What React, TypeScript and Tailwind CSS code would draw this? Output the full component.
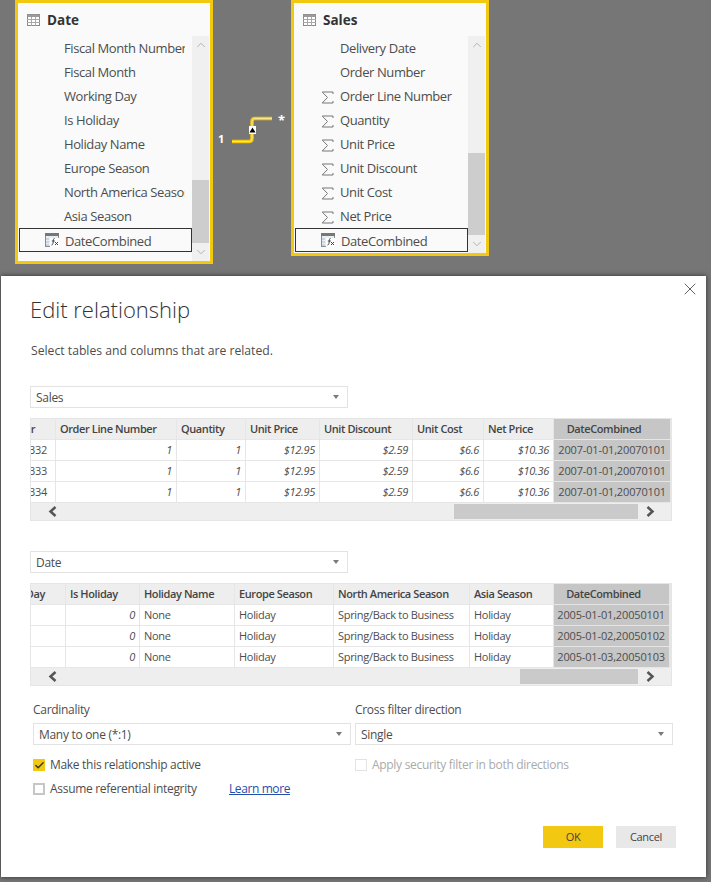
import { Check, ChevronDown, ChevronUp, X } from "lucide-react";

const font = { fontFamily: '"Open Sans", "Noto Sans", sans-serif' };

function TableIcon() {
  return (
    <svg width="13" height="12" viewBox="0 0 13 12" className="shrink-0">
      <rect x="0.5" y="0.5" width="12" height="11" fill="#fff" stroke="#8a8a8a" />
      <rect x="0.5" y="0.5" width="12" height="2.5" fill="#9a9a9a" />
      <path d="M0 5.500h13M0 8.500h13M4.500 3v9M8.500 3v9" stroke="#a8a8a8" fill="none" />
    </svg>
  );
}

function SigmaIcon() {
  return (
    <svg width="13" height="13" viewBox="0 0 13 13" className="shrink-0">
      <path d="M12 3V1H1.200L6.500 6.500 1.200 12H12v-2" fill="none" stroke="#777" strokeWidth="1" />
    </svg>
  );
}

function CalcIcon() {
  return (
    <svg width="14" height="14" viewBox="0 0 14 14" className="shrink-0">
      <rect x="0.5" y="0.5" width="13" height="13" fill="#e8eef4" stroke="#8b8b8b" />
      <rect x="0" y="0" width="14" height="3" fill="#777" />
      <rect x="5" y="5" width="9" height="9" fill="#fff" />
      <path d="M1 6h3M1 9h3M1 12h3" stroke="#a8bdd0" />
      <path d="M9.500 5.500c-1.400 0-1 1.300-1.300 3.500-.2 1.800-.6 3-1.700 3M6.800 8h3M10 9l3 3M13 9l-3 3" fill="none" stroke="#333" strokeWidth="0.9" />
    </svg>
  );
}

function ScrollBar({ before, thumb, after }: { before: string; thumb: string; after: string }) {
  return (
    <div className="flex flex-col w-[17px] h-full bg-[#f0f0f0] shrink-0">
      <div className={`${before} flex justify-center pt-[2px]`}>
        <ChevronUp size={14} strokeWidth={1.4} className="text-[#a6a6a6]" />
      </div>
      <div className={`${thumb} bg-[#cdcdcd]`} />
      <div className={`${after} flex justify-center items-end pb-[2px]`}>
        <ChevronDown size={14} strokeWidth={1.4} className="text-[#a6a6a6]" />
      </div>
    </div>
  );
}

function FieldRow({ name, sigma }: { name: string; sigma?: boolean }) {
  return (
    <div className="flex items-center h-6 w-[166px] overflow-hidden pl-[26px] pt-[2px] text-[13px] tracking-[-0.4px] text-[#4d4d4d] whitespace-nowrap">
      <div className="w-[13px] shrink-0">{sigma && <SigmaIcon />}</div>
      <span className="ml-[6px]">{name}</span>
    </div>
  );
}

function SelectedRow() {
  return (
    <div className="flex items-center h-6 w-[173px] border border-[#333] pl-[25px] text-[13px] tracking-[-0.4px] text-[#4d4d4d] whitespace-nowrap">
      <CalcIcon />
      <span className="ml-[6px] mt-[4px]">DateCombined</span>
    </div>
  );
}

function ModelCard({
  title,
  height,
  fields,
  scroll,
}: {
  title: string;
  height: string;
  fields: { name: string; sigma?: boolean }[];
  scroll: { before: string; thumb: string; after: string };
}) {
  return (
    <div className={`${height} w-[198px] shrink-0 border-[3px] border-[#f2c811] bg-[#fafafa] flex flex-col`}>
      <div className="h-[33px] shrink-0 flex items-center pl-[9px] pt-[1px] gap-[7px]">
        <TableIcon />
        <span className="text-[13.5px] font-bold text-[#333]">{title}</span>
      </div>
      <div className="flex flex-1 min-h-0 pl-px pr-px">
        <div className="w-[173px] shrink-0">
          {fields.map((f) => (
            <FieldRow key={f.name} name={f.name} sigma={f.sigma} />
          ))}
          <SelectedRow />
        </div>
        <ScrollBar {...scroll} />
      </div>
    </div>
  );
}

function Connector() {
  return (
    <svg width="78" height="160" viewBox="0 0 78 160" className="shrink-0">
      <path d="M19 141.500H36q3 0 3-3V121.500q0-3 3-3H59" fill="none" stroke="#f2c811" strokeWidth="3.500" />
      <path d="M19 141.500H36q3 0 3-3V121.500q0-3 3-3H59" fill="none" stroke="#fbe68c" strokeWidth="1" />
      <rect x="36" y="126" width="7" height="8" fill="#fff" />
      <path d="M39.500 127.500l3 5h-6z" fill="#000" />
      <text x="5" y="143" fill="#fff" fontSize="11" fontWeight="700">1</text>
      <text x="65" y="125" fill="#fff" fontSize="13" fontWeight="700">*</text>
    </svg>
  );
}

function Caret() {
  return <span className="w-0 h-0 border-x-[3.5px] border-x-transparent border-t-[4px] border-t-[#7a7a7a]" />;
}

function Select({ value, width }: { value: string; width: string }) {
  return (
    <div className={`${width} h-[22px] flex items-center justify-between border border-[#e3e3e3] pl-[5px] pr-[8px] text-[12px] tracking-[-0.3px] text-[#4d4d4d] bg-white`}>
      <span className="mt-px">{value}</span>
      <Caret />
    </div>
  );
}

type Cell = { text: string; align?: "r" | "l" | "clip" };

function DataTable({
  columns,
  headers,
  rows,
  thumb,
  spacer,
}: {
  columns: string;
  headers: { text: string; clip?: boolean }[];
  rows: Cell[][];
  thumb: string;
  spacer: string;
}) {
  const last = headers.length - 1;
  return (
    <div className="ml-[29px] w-[642px] border border-[#e6e6e6] bg-[#e6e6e6] text-[11px] tracking-[-0.3px] whitespace-nowrap">
      <div className={`grid ${columns} gap-x-px gap-y-px bg-[#e6e6e6] pb-px`}>
        {headers.map((h, i) => (
          <div
            key={h.text}
            className={`h-5 flex items-center overflow-hidden font-semibold tracking-[-0.4px] text-[#444] ${
              i === last ? "bg-[#c6c6c6] justify-center pr-[16px]" : "bg-[#eeeeee] pl-[4px]"
            } ${h.clip ? "justify-end pr-[20px] pl-0" : ""}`}
          >
            <span className="shrink-0">{h.text}</span>
          </div>
        ))}
        {rows.flat().map((c, i) => {
          const isLast = i % headers.length === last;
          return (
            <div
              key={i}
              className={`h-5 flex items-center overflow-hidden text-[#4d4d4d] ${
                isLast ? "bg-[#c6c6c6] justify-end pr-[4px] tracking-[-0.15px]" : "bg-white"
              } ${c.align === "r" && !isLast ? "justify-end pr-[4px] italic" : ""} ${
                c.align === "l" && !isLast ? "pl-[4px]" : ""
              } ${c.align === "clip" ? "justify-end pr-[8px]" : ""}`}
            >
              <span className="shrink-0">{c.text}</span>
            </div>
          );
        })}
      </div>
      <div className="h-[17px] bg-[#eeeeee] flex items-center">
        <svg width="10" height="11" viewBox="0 0 10 11" className="ml-[17px] shrink-0">
          <path d="M7.500 1L2.500 5.500L7.500 10" fill="none" stroke="#555" strokeWidth="2.500" />
        </svg>
        <div className={spacer} />
        <div className={`${thumb} h-[15px] bg-[#cacaca]`} />
        <svg width="10" height="11" viewBox="0 0 10 11" className="ml-[7px] shrink-0">
          <path d="M2.500 1L7.500 5.500L2.500 10" fill="none" stroke="#555" strokeWidth="2.500" />
        </svg>
      </div>
    </div>
  );
}

const salesRows: Cell[][] = ["332", "333", "334"].map((n) => [
  { text: "20071" + n, align: "clip" },
  { text: "1", align: "r" },
  { text: "1", align: "r" },
  { text: "$12.95", align: "r" },
  { text: "$2.59", align: "r" },
  { text: "$6.6", align: "r" },
  { text: "$10.36", align: "r" },
  { text: "2007-01-01,20070101", align: "r" },
]);

const dateRows: Cell[][] = ["2005-01-01,20050101", "2005-01-02,20050102", "2005-01-03,20050103"].map((d) => [
  { text: "", align: "r" },
  { text: "0", align: "r" },
  { text: "None", align: "l" },
  { text: "Holiday", align: "l" },
  { text: "Spring/Back to Business", align: "l" },
  { text: "Holiday", align: "l" },
  { text: d, align: "r" },
]);

export default function App() {
  return (
    <div style={font} className="w-[711px] h-[882px] bg-[#767676] overflow-hidden">
      <div className="h-[276px] flex items-start pl-[15px]">
        <ModelCard
          title="Date"
          height="h-[264px]"
          scroll={{ before: "h-[144px]", thumb: "h-[63px]", after: "h-[18px]" }}
          fields={[
            { name: "Fiscal Month Number" },
            { name: "Fiscal Month" },
            { name: "Working Day" },
            { name: "Is Holiday" },
            { name: "Holiday Name" },
            { name: "Europe Season" },
            { name: "North America Season" },
            { name: "Asia Season" },
          ]}
        />
        <Connector />
        <ModelCard
          title="Sales"
          height="h-[256px]"
          scroll={{ before: "h-[117px]", thumb: "h-[82px]", after: "h-[18px]" }}
          fields={[
            { name: "Delivery Date" },
            { name: "Order Number" },
            { name: "Order Line Number", sigma: true },
            { name: "Quantity", sigma: true },
            { name: "Unit Price", sigma: true },
            { name: "Unit Discount", sigma: true },
            { name: "Unit Cost", sigma: true },
            { name: "Net Price", sigma: true },
          ]}
        />
      </div>

      <div className="relative ml-px w-[705px] h-[601px] bg-white shadow-[0_0_5px_rgba(0,0,0,0.6)]">
        <button className="absolute top-[3px] right-[6px] text-[#555]">
          <X size={20} strokeWidth={1.1} />
        </button>
        <div className="pt-[14px] pl-[29px] text-[22px] font-light leading-[38px] text-[#333]">Edit relationship</div>
        <div className="mt-[14px] pl-[30px] text-[12.2px] leading-[18px] text-[#4d4d4d]">
          Select tables and columns that are related.
        </div>

        <div className="mt-[26px] ml-[29px]">
          <Select value="Sales" width="w-[318px]" />
        </div>
        <div className="mt-[10px]">
          <DataTable
            columns="grid-cols-[24px_120px_68px_73px_92px_70px_69px_116px]"
            headers={[
              { text: "Order Number", clip: true },
              { text: "Order Line Number" },
              { text: "Quantity" },
              { text: "Unit Price" },
              { text: "Unit Discount" },
              { text: "Unit Cost" },
              { text: "Net Price" },
              { text: "DateCombined" },
            ]}
            rows={salesRows}
            spacer="w-[396px] shrink-0"
            thumb="w-[184px] shrink-0"
          />
        </div>

        <div className="mt-[30px] ml-[29px]">
          <Select value="Date" width="w-[318px]" />
        </div>
        <div className="mt-[10px]">
          <DataTable
            columns="grid-cols-[34px_73px_94px_98px_135px_83px_115px]"
            headers={[
              { text: "Working Day", clip: true },
              { text: "Is Holiday" },
              { text: "Holiday Name" },
              { text: "Europe Season" },
              { text: "North America Season" },
              { text: "Asia Season" },
              { text: "DateCombined" },
            ]}
            rows={dateRows}
            spacer="w-[462px] shrink-0"
            thumb="w-[118px] shrink-0"
          />
        </div>

        <div className="mt-[15px] ml-[32px] flex gap-[4px] text-[12px] tracking-[-0.3px] text-[#4d4d4d]">
          <div className="flex flex-col w-[318px]">
            <span className="leading-[18px] mb-[4px]">Cardinality</span>
            <Select value="Many to one (*:1)" width="w-[318px]" />
            <div className="mt-[13px] h-[14px] flex items-center gap-[5px]">
              <span className="w-3 h-3 bg-[#f2c811] flex items-center justify-center">
                <Check size={11} strokeWidth={3} className="text-[#333]" />
              </span>
              <span>Make this relationship active</span>
            </div>
            <div className="mt-[10px] h-[14px] flex items-center">
              <span className="w-3 h-3 border-2 border-[#c6c6c6] mr-[5px]" />
              <span className="w-[179px]">Assume referential integrity</span>
              <span className="text-[#1f4fa8] underline tracking-[-0.4px]">Learn more</span>
            </div>
          </div>
          <div className="flex flex-col w-[318px]">
            <span className="leading-[18px] mb-[4px]">Cross filter direction</span>
            <Select value="Single" width="w-[318px]" />
            <div className="mt-[13px] h-[14px] flex items-center gap-[5px] text-[#aaaaaa]">
              <span className="w-3 h-3 border border-[#e3e3e3]" />
              <span>Apply security filter in both directions</span>
            </div>
          </div>
        </div>

        <div className="mt-[30px] pr-[30px] flex justify-end gap-[13px] text-[11px] tracking-[-0.3px] text-[#444]">
          <button className="w-[60px] h-[22px] bg-[#f2c811]">OK</button>
          <button className="w-[60px] h-[22px] bg-[#e8e8e8]">Cancel</button>
        </div>
      </div>
    </div>
  );
}
